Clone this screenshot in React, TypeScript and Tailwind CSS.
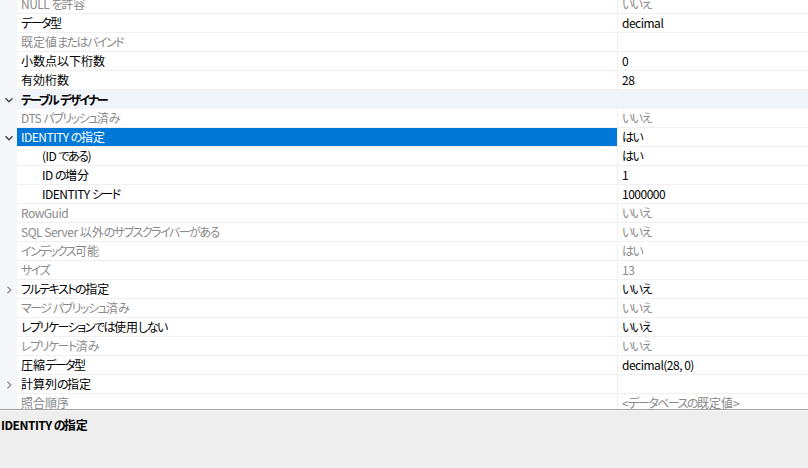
type Row = {
  name: string
  value?: string
  gray?: boolean
  indent?: boolean
  chevron?: 'down' | 'right'
  category?: boolean
  selected?: boolean
}

const rows: Row[] = [
  { name: 'NULL を許容', value: 'いいえ', gray: true },
  { name: 'データ型', value: 'decimal' },
  { name: '既定値またはバインド', value: '', gray: true },
  { name: '小数点以下桁数', value: '0' },
  { name: '有効桁数', value: '28' },
  { name: 'テーブル デザイナー', category: true, chevron: 'down' },
  { name: 'DTS パブリッシュ済み', value: 'いいえ', gray: true },
  { name: 'IDENTITY の指定', value: 'はい', selected: true, chevron: 'down' },
  { name: '(ID である)', value: 'はい', indent: true },
  { name: 'ID の増分', value: '1', indent: true },
  { name: 'IDENTITY シード', value: '1000000', indent: true },
  { name: 'RowGuid', value: 'いいえ', gray: true },
  { name: 'SQL Server 以外のサブスクライバーがある', value: 'いいえ', gray: true },
  { name: 'インデックス可能', value: 'はい', gray: true },
  { name: 'サイズ', value: '13', gray: true },
  { name: 'フルテキストの指定', value: 'いいえ', chevron: 'right' },
  { name: 'マージ パブリッシュ済み', value: 'いいえ', gray: true },
  { name: 'レプリケーションでは使用しない', value: 'いいえ' },
  { name: 'レプリケート済み', value: 'いいえ', gray: true },
  { name: '圧縮データ型', value: 'decimal(28, 0)' },
  { name: '計算列の指定', value: '', chevron: 'right' },
  { name: '照合順序', value: '<データベースの既定値>', gray: true },
]

// the original UI font has narrow kana and latin, so squeeze those runs
// kanji stay at full width
function Jp({ text, bold }: { text: string; bold?: boolean }) {
  const runs = text.match(/[\u3040-\u30ff]+|[\u4e00-\u9fff]+|[^\u3040-\u30ff\u4e00-\u9fff]+/g) ?? []
  return (
    <span className="whitespace-nowrap">
      {runs.map((r, i) => {
        const c = r.charCodeAt(0)
        const cls =
          c >= 0x3040 && c <= 0x30ff
            ? bold
              ? 'tracking-[-2px]'
              : 'tracking-[-1.5px]'
            : c >= 0x4e00 && c <= 0x9fff
              ? ''
              : 'tracking-[-0.5px]'
        return (
          <span key={i} className={cls}>
            {r}
          </span>
        )
      })}
    </span>
  )
}

function Chevron({ dir }: { dir: 'down' | 'right' }) {
  return dir === 'down' ? (
    <svg width="10" height="10" viewBox="0 0 10 10" fill="none">
      <path d="M1.5 3.2 L5 6.7 L8.5 3.2" stroke="#454545" strokeWidth="1.4" />
    </svg>
  ) : (
    <svg width="10" height="10" viewBox="0 0 10 10" fill="none">
      <path d="M3.5 1.8 L6.8 5 L3.5 8.2" stroke="#909090" strokeWidth="1.3" />
    </svg>
  )
}

function GridRow({ row }: { row: Row }) {
  const text = row.gray ? 'text-[#8a8a8a]' : 'text-black'
  return (
    <div className="flex h-[19px] shrink-0">
      <div className="w-[17px] shrink-0 bg-[#f4f6f9] flex items-center justify-center pl-[1px]">
        {row.chevron && <Chevron dir={row.chevron} />}
      </div>
      {row.category ? (
        <div className="flex-1 flex items-center pl-[4px] bg-[#f1f4f8] font-bold text-black">
          <Jp text={row.name} bold />
        </div>
      ) : (
        <>
          <div
            className={
              'w-[600px] shrink-0 flex items-center border-b border-[#f0f0f0] ' +
              (row.indent ? 'pl-[25px] ' : 'pl-[4px] ') +
              (row.selected ? 'bg-[#0078d7] text-white' : text)
            }
          >
            <Jp text={row.name} />
          </div>
          <div
            className={
              'flex-1 flex items-center pl-[4px] border-b border-l border-[#f0f0f0] ' +
              (row.selected ? 'text-black' : text)
            }
          >
            <Jp text={row.value ?? ''} />
          </div>
        </>
      )}
    </div>
  )
}

export default function App() {
  return (
    <div className="w-[808px] h-[468px] flex flex-col overflow-hidden bg-white text-[12px] leading-none font-['Noto_Sans_CJK_JP',sans-serif] [font-feature-settings:'palt']">
      <div className="h-[409px] shrink-0 overflow-hidden flex flex-col">
        <div className="-mt-[5px] flex flex-col">
          {rows.map((r) => (
            <GridRow key={r.name} row={r} />
          ))}
        </div>
      </div>
      <div className="flex-1 bg-[#eeeeee] border-t border-[#a0a0a0]">
        <div className="border-t border-[#f8f8f8] pt-[8px] pl-[1px] font-bold text-black">
          <Jp text="IDENTITY の指定" bold />
        </div>
      </div>
    </div>
  )
}
